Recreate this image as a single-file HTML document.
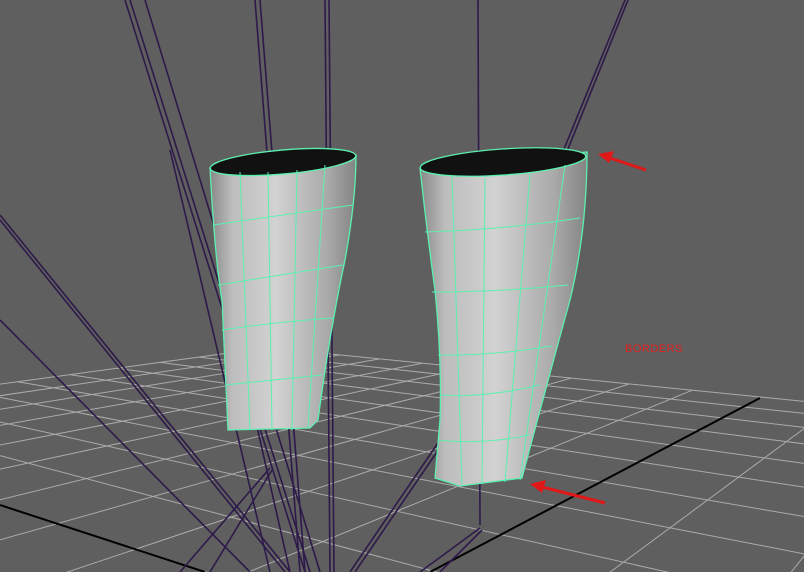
<!DOCTYPE html>
<html><head><meta charset="utf-8"><style>
html,body{margin:0;padding:0;background:#5f5f5f;overflow:hidden;width:804px;height:572px}
svg{display:block}
</style></head><body>
<svg id="s" width="804" height="572" viewBox="0 0 804 572" xmlns="http://www.w3.org/2000/svg">
<defs>
<linearGradient id="lg" x1="0" x2="1" y1="0" y2="0">
<stop offset="0" stop-color="#888"/><stop offset="0.15" stop-color="#bdbdbd"/><stop offset="0.45" stop-color="#d2d2d2"/><stop offset="0.8" stop-color="#aaa"/><stop offset="1" stop-color="#848484"/>
</linearGradient>
</defs>
<rect width="804" height="572" fill="#5f5f5f"/>
<g id="grid" stroke="#b8b8b8" stroke-width="1" opacity="0.85"></g>
<line x1="0" y1="505" x2="205" y2="572" stroke="#000" stroke-width="2"/>
<line x1="430" y1="572" x2="760" y2="398" stroke="#000" stroke-width="2"/>
<g stroke="#2e1a4a" stroke-width="1.6" fill="none">
<line x1="125" y1="0" x2="305" y2="572"/><line x1="130" y1="0" x2="310" y2="572"/>
<line x1="145" y1="0" x2="320" y2="572"/>
<line x1="255" y1="0" x2="300" y2="572"/><line x1="260" y1="0" x2="305" y2="572"/>
<line x1="325" y1="0" x2="330" y2="572"/><line x1="329" y1="0" x2="334" y2="572"/>
<line x1="478" y1="0" x2="480" y2="525"/>
<line x1="625" y1="0" x2="490" y2="330"/><line x1="628" y1="0" x2="495" y2="330"/>
<line x1="0" y1="215" x2="290" y2="572"/><line x1="0" y1="220" x2="285" y2="572"/>
<line x1="0" y1="320" x2="250" y2="572"/>
<line x1="170" y1="150" x2="270" y2="572"/>
<line x1="440" y1="440" x2="350" y2="572"/><line x1="445" y1="440" x2="355" y2="572"/>
<line x1="270" y1="468" x2="180" y2="572"/><line x1="272" y1="470" x2="210" y2="572"/>
<line x1="480" y1="528" x2="420" y2="572"/><line x1="482" y1="530" x2="440" y2="572"/>
<line x1="235" y1="330" x2="290" y2="572"/>
</g>
<path d="M210,168 Q215,260 222,300 L228,430 L310,428 L318,420 Q330,330 345,260 Q356,200 356,155 Z" fill="url(#lg)" stroke="#5cf0b0" stroke-width="1.3"/>
<ellipse cx="283" cy="162" rx="73" ry="12" transform="rotate(-5 283 162)" fill="#111" stroke="#5cf0b0" stroke-width="1.3"/>
<g stroke="#5cf0b0" stroke-width="1" fill="none">
<path d="M213,225 Q285,215 353,205"/><path d="M218,285 Q280,275 343,265"/><path d="M222,330 Q275,322 333,318"/><path d="M225,385 Q272,380 322,375"/>
<path d="M240,172 L250,430"/><path d="M268,172 L272,430"/><path d="M297,170 L292,430"/><path d="M325,165 L308,428"/>
</g>
<path d="M420,168 Q428,240 435,290 Q442,360 440,420 L435,478 L460,486 L522,478 Q548,380 570,300 Q587,230 587,152 Z" fill="url(#lg)" stroke="#5cf0b0" stroke-width="1.3"/>
<ellipse cx="503" cy="162" rx="83" ry="13" transform="rotate(-4 503 162)" fill="#111" stroke="#5cf0b0" stroke-width="1.3"/>
<g stroke="#5cf0b0" stroke-width="1" fill="none">
<path d="M425,232 Q500,230 580,218"/><path d="M432,292 Q500,292 568,285"/><path d="M438,355 Q490,356 552,346"/><path d="M440,395 Q485,398 540,385"/><path d="M438,440 Q480,445 530,435"/>
<path d="M452,176 L462,484"/><path d="M485,178 L482,484"/><path d="M530,174 L505,482"/><path d="M565,165 L520,480"/>
</g>
<g stroke="#e01818" stroke-width="3" fill="#e01818">
<line x1="646" y1="170" x2="610" y2="158"/><polygon points="598,154 614,151 609,163" stroke="none"/>
<line x1="605" y1="503" x2="542" y2="487"/><polygon points="530,484 546,480 542,493" stroke="none"/>
</g>
<text x="625" y="352" font-family="Liberation Sans, sans-serif" font-size="11" fill="#e02020" letter-spacing="0.5">BORDERS</text>
</svg>
<script>
(function(){
var g=document.getElementById('grid');
var O=[344,617],V1=[-809,240],V2=[1059,240],k1=0.11,k2=0.14;
function P(u,v){var w=1+u*k1+v*k2;return [(O[0]+u*k1*V1[0]+v*k2*V2[0])/w,(O[1]+u*k1*V1[1]+v*k2*V2[1])/w];}
var N=10,M=-3,s='';
for(var i=M;i<=N;i++){
 var a=P(i,M),b=P(i,N);s+='<line x1="'+a[0]+'" y1="'+a[1]+'" x2="'+b[0]+'" y2="'+b[1]+'"/>';
 a=P(M,i);b=P(N,i);s+='<line x1="'+a[0]+'" y1="'+a[1]+'" x2="'+b[0]+'" y2="'+b[1]+'"/>';
}
g.innerHTML=s;
})();
</script>
</body></html>
